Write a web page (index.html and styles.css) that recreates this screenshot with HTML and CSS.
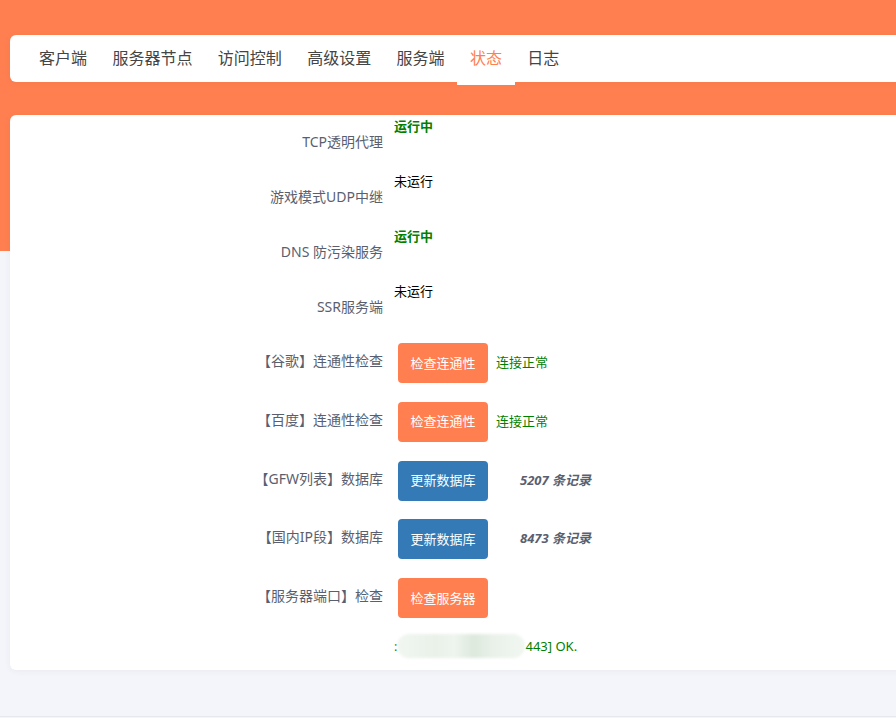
FILE: index.html
```html
<!DOCTYPE html>
<html lang="zh-CN">
<head>
<meta charset="utf-8">
<title>状态</title>
<link rel="stylesheet" href="styles.css">
</head>
<body>
<div class="page">
  <nav class="tabs card">
    <a class="tab">客户端</a>
    <a class="tab">服务器节点</a>
    <a class="tab">访问控制</a>
    <a class="tab">高级设置</a>
    <a class="tab">服务端</a>
    <a class="tab active">状态</a>
    <a class="tab">日志</a>
  </nav>

  <section class="panel card">
    <div class="row status">
      <div class="label">TCP透明代理</div>
      <div class="value"><b class="ok">运行中</b></div>
    </div>
    <div class="row status">
      <div class="label">游戏模式UDP中继</div>
      <div class="value">未运行</div>
    </div>
    <div class="row status">
      <div class="label">DNS 防污染服务</div>
      <div class="value"><b class="ok">运行中</b></div>
    </div>
    <div class="row status">
      <div class="label">SSR服务端</div>
      <div class="value">未运行</div>
    </div>

    <div class="row action">
      <div class="label">【谷歌】连通性检查</div>
      <div class="value"><button class="btn orange">检查连通性</button><span class="result">连接正常</span></div>
    </div>
    <div class="row action">
      <div class="label">【百度】连通性检查</div>
      <div class="value"><button class="btn orange">检查连通性</button><span class="result">连接正常</span></div>
    </div>
    <div class="row action">
      <div class="label">【GFW列表】数据库</div>
      <div class="value"><button class="btn blue">更新数据库</button><em class="count">5207 条记录</em></div>
    </div>
    <div class="row action">
      <div class="label">【国内IP段】数据库</div>
      <div class="value"><button class="btn blue">更新数据库</button><em class="count">8473 条记录</em></div>
    </div>
    <div class="row action">
      <div class="label">【服务器端口】检查</div>
      <div class="value"><button class="btn orange">检查服务器</button></div>
    </div>
    <div class="row last">
      <div class="label"></div>
      <div class="value"><span class="port">:<span class="blur"></span>443] OK.</span></div>
    </div>
  </section>
  <footer class="foot"></footer>
</div>
</body>
</html>
```

FILE: styles.css
```css
html, body {
  margin: 0;
  padding: 0;
  overflow: hidden;
}
body {
  font-family: "Noto Sans", "Noto Sans CJK SC", sans-serif;
  background: linear-gradient(#ff7f50 0, #ff7f50 251px, #f4f5fa 251px);
  min-height: 718px;
  color: #333;
}
.page {
  padding-top: 35px;
}
.card {
  background: #fff;
  border-radius: 6px;
  margin: 0 -30px 0 10px;
  box-shadow: 0 1px 6px rgba(60, 60, 90, 0.06);
}
.tabs {
  display: flex;
  height: 47px;
  padding-left: 16.3px;
  align-items: stretch;
}
.tab {
  position: relative;
  display: flex;
  align-items: center;
  padding: 0 12.7px 3px;
  font-size: 16px;
  color: #444;
  cursor: pointer;
}
.tab.active {
  color: #ff7f50;
}
.tab.active::after {
  content: "";
  position: absolute;
  left: 0;
  right: 0;
  bottom: -3px;
  height: 3px;
  background: #fff;
}
.panel {
  margin-top: 33px;
  padding: 2px 0 12px;
}
.row {
  display: flex;
  font-size: 13px;
}
.label {
  width: 373px;
  flex: none;
  text-align: right;
  font-size: 14px;
  color: #5a5f70;
  line-height: 20px;
}
.value {
  margin-left: 11px;
  line-height: 20px;
  color: #000;
  display: flex;
  align-items: center;
}
.status {
  height: 55px;
}
.status .label {
  padding-top: 15px;
}
.status .value {
  align-items: flex-start;
  margin-top: -1px;
}
.ok {
  color: #008000;
  font-weight: 700;
}
.action {
  height: 58.75px;
  align-items: flex-start;
}
.action .label {
  padding-top: 14px;
}
.btn {
  margin: 6px 0 0 4px;
  width: 90px;
  height: 40px;
  border: none;
  border-radius: 4px;
  color: #fff;
  font-family: inherit;
  font-size: 13px;
  padding: 0 0 2px;
  cursor: pointer;
}
.action .value {
  align-items: flex-start;
}
.orange {
  background: #ff7f50;
}
.blue {
  background: #337ab7;
}
.result {
  color: #008000;
  margin-left: 8px;
  margin-top: 15px;
}
.count {
  margin-left: 32px;
  margin-top: 15px;
  font-weight: 700;
  font-style: italic;
  color: #5a5f70;
}
.last .value {
  margin-top: 3px;
}
.port {
  color: #008000;
  display: flex;
  align-items: center;
}
.blur {
  display: inline-block;
  width: 128px;
  height: 24px;
  border-radius: 12px;
  background: linear-gradient(90deg, #f1f6f1 0, #e9f1e9 30%, #eef4ee 45%, #dde9dd 60%, #e9f1e9 75%, #f1f6f1 100%);
  filter: blur(1.5px);
}
.foot {
  margin-top: 46px;
  height: 4px;
  border-top: 1px solid #e7e8ee;
}
```
